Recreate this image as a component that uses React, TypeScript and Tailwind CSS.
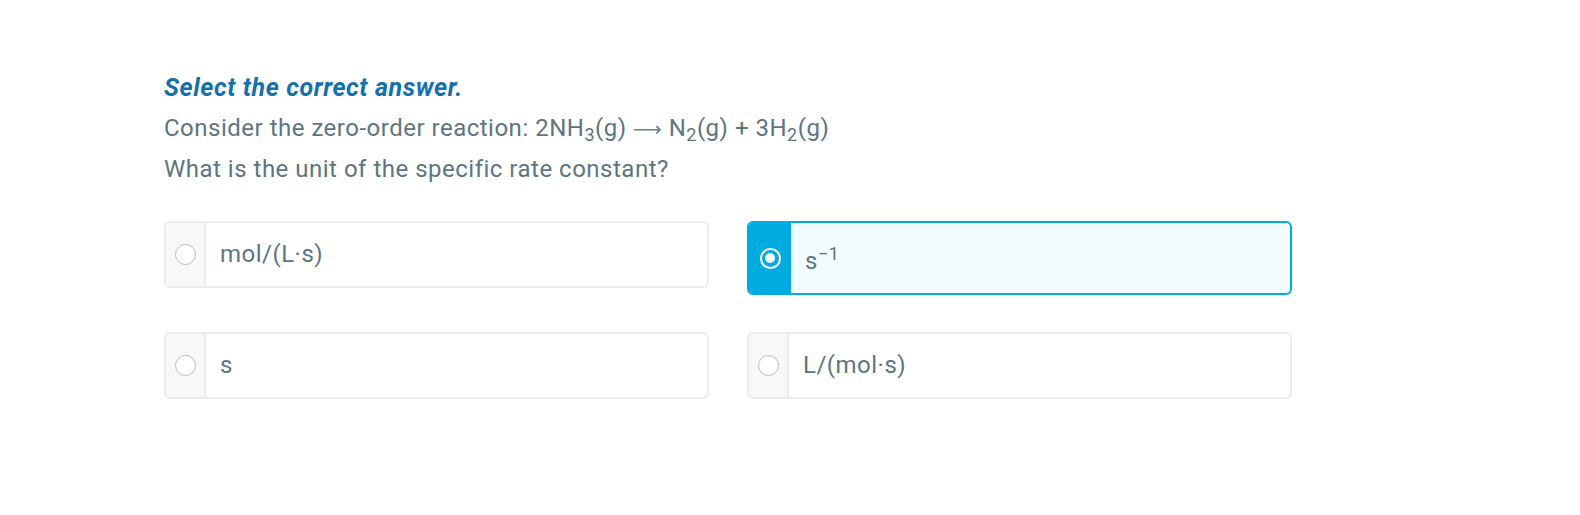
import React from "react";

const font = { fontFamily: "Roboto, 'Noto Sans', sans-serif" };

function Radio({ selected }: { selected: boolean }) {
  if (selected) {
    return (
      <span className="flex h-[21px] w-[21px] items-center justify-center rounded-full border-2 border-white">
        <span className="h-[10px] w-[10px] rounded-full bg-white" />
      </span>
    );
  }
  return <span className="h-[21px] w-[21px] rounded-full border border-[#b9b9b9] bg-white" />;
}

function Choice({ selected, children }: { selected?: boolean; children: React.ReactNode }) {
  return (
    <div
      className={
        selected
          ? "flex overflow-hidden rounded-[6px] border-2 border-[#00abdf] bg-[#f2fbfe]"
          : "flex overflow-hidden rounded-[6px] border-2 border-[#ececec] bg-white"
      }
    >
      <div
        className={
          selected
            ? "flex w-[42px] shrink-0 items-center justify-center bg-[#00abdf]"
            : "flex w-[40px] shrink-0 items-center justify-center border-r-2 border-[#ececec] bg-[#f8f8f8]"
        }
      >
        <Radio selected={!!selected} />
      </div>
      <div
        className={
          selected
            ? "flex items-center px-[14px] pb-[15px] pt-[22px] text-[24px] leading-[33px] tracking-[0.5px] text-[#5d7580]"
            : "flex items-center px-[14px] py-[15px] text-[24px] leading-[33px] tracking-[0.5px] text-[#5d7580]"
        }
      >
        {children}
      </div>
    </div>
  );
}

export default function App() {
  return (
    <div className="min-h-[515px] bg-white" style={font}>
      <div className="w-[1292px] pl-[164px] pt-[70px]">
        <p className="text-[25px] font-bold italic leading-[36px] tracking-[0.6px] text-[#1470ae]">
          Select the correct answer.
        </p>
        <p className="mt-[2px] text-[24px] leading-[40px] tracking-[0.5px] text-[#5d7580]">
          Consider the zero-order reaction: 2NH<sub className="text-[0.75em]">3</sub>(g){" "}
          <span className="text-[20px] text-[#6a8089]" style={{ fontFamily: "'DejaVu Sans', sans-serif" }}>
            ⟶
          </span>{" "}
          N<sub className="text-[0.75em]">2</sub>(g) + 3H<sub className="text-[0.75em]">2</sub>(g)
        </p>
        <p className="text-[24px] leading-[40px] tracking-[0.5px] text-[#5d7580]">
          What is the unit of the specific rate constant?
        </p>
        <div className="mt-[32px] grid grid-cols-2 items-start gap-x-[38px] gap-y-[37px]">
          <Choice>mol/(L·s)</Choice>
          <Choice selected>
            <span className="relative">
              s<sup className="text-[0.75em]">−1</sup>
            </span>
          </Choice>
          <Choice>s</Choice>
          <Choice>L/(mol·s)</Choice>
        </div>
      </div>
    </div>
  );
}
